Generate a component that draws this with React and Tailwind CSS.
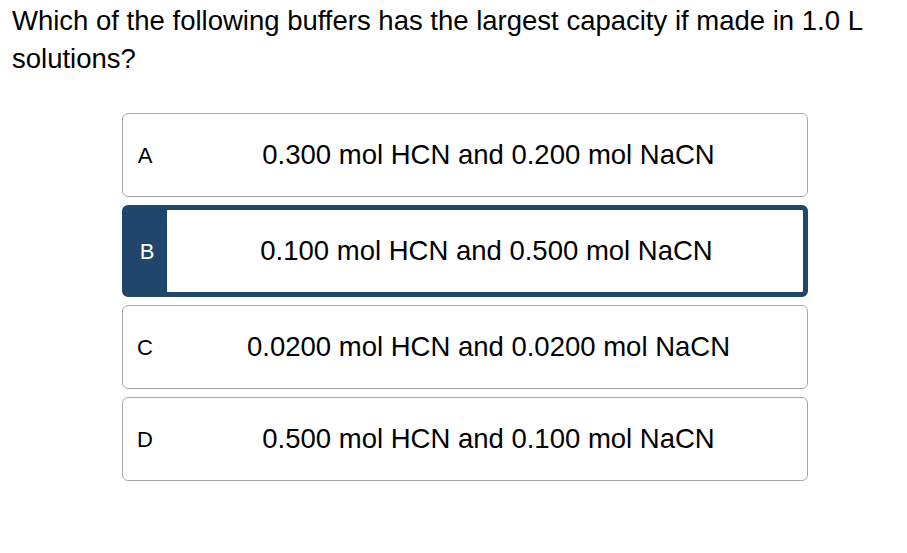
import React from 'react';

const options = [
    { letter: 'A', text: '0.300 mol HCN and 0.200 mol NaCN' },
    { letter: 'B', text: '0.100 mol HCN and 0.500 mol NaCN', selected: true },
    { letter: 'C', text: '0.0200 mol HCN and 0.0200 mol NaCN' },
    { letter: 'D', text: '0.500 mol HCN and 0.100 mol NaCN' },
];

const Option = ({ letter, text, selected }) => (
    <div
        className={`flex rounded-[6px] bg-white ${selected ? 'h-[92px] border-[5px] border-[#21466b]' : 'h-[84px] border border-[#a8a8a8]'}`}
    >
        <div
            className={`flex items-center justify-center text-[22px] ${selected ? 'w-[40px] bg-[#21466b] text-white' : 'w-[44px] text-black'}`}
        >
            {letter}
        </div>
        <div className="flex-1 flex items-center justify-center pl-[3px] text-[27.5px] text-black">
            {text}
        </div>
    </div>
);

export default function App() {
    return (
        <div className="w-[907px] h-[553px] bg-white overflow-hidden" style={{ fontFamily: '"Liberation Sans", Arial, sans-serif' }}>
            <p className="px-[12px] pt-[2px] text-[27.5px] leading-[38px] text-black">
                Which of the following buffers has the largest capacity if made in 1.0 L solutions?
            </p>
            <div className="ml-[122px] mt-[35px] w-[686px] flex flex-col gap-[8px]">
                {options.map(o => (
                    <Option key={o.letter} {...o} />
                ))}
            </div>
        </div>
    );
}
